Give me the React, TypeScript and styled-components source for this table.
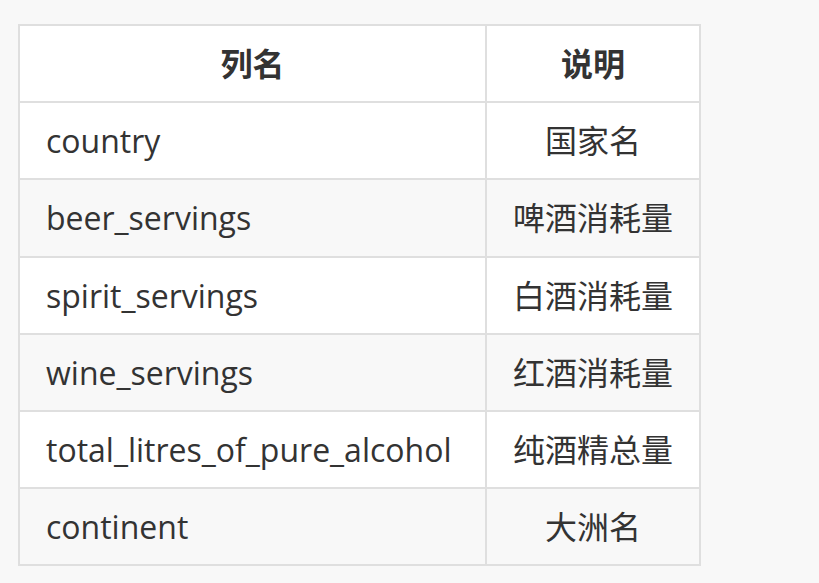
import React, { FC } from 'react';
import styled, { createGlobalStyle } from 'styled-components';

const GlobalStyle = createGlobalStyle`
  html, body {
    margin: 0;
    padding: 0;
    background: #f8f8f8;
  }
`;

const Page = styled.div`
  padding: 24px 18px;
  font-family: 'Open Sans', 'Noto Sans CJK SC', sans-serif;
  color: #333;
`;

const Table = styled.table`
  border-collapse: collapse;
  table-layout: fixed;
  width: 683px;
  font-size: 32px;
  line-height: 1.6;
`;

const HeadCell = styled.th<{ $width?: number }>`
  box-sizing: border-box;
  width: ${p => (p.$width ? `${p.$width}px` : 'auto')};
  height: 51px;
  padding: 12px 26px;
  border: 2px solid #dfdfdf;
  background: #fff;
  font-weight: 700;
  text-align: center;
  white-space: nowrap;
`;

const Row = styled.tr<{ $striped: boolean }>`
  background: ${p => (p.$striped ? '#f8f8f8' : '#fff')};
`;

const Cell = styled.td<{ $center?: boolean }>`
  height: 51px;
  padding: 12px 26px;
  border: 2px solid #dfdfdf;
  text-align: ${p => (p.$center ? 'center' : 'left')};
  white-space: nowrap;
  overflow: visible;
`;

const columns: [string, string][] = [
  ['country', '国家名'],
  ['beer_servings', '啤酒消耗量'],
  ['spirit_servings', '白酒消耗量'],
  ['wine_servings', '红酒消耗量'],
  ['total_litres_of_pure_alcohol', '纯酒精总量'],
  ['continent', '大洲名'],
];

const App: FC = () => {
  return (
    <Page>
      <GlobalStyle />
      <Table>
        <thead>
          <tr>
            <HeadCell $width={467}>列名</HeadCell>
            <HeadCell>说明</HeadCell>
          </tr>
        </thead>
        <tbody>
          {columns.map(([name, desc], i) => (
            <Row key={name} $striped={i % 2 === 1}>
              <Cell>{name}</Cell>
              <Cell $center>{desc}</Cell>
            </Row>
          ))}
        </tbody>
      </Table>
    </Page>
  );
};

export default App;
